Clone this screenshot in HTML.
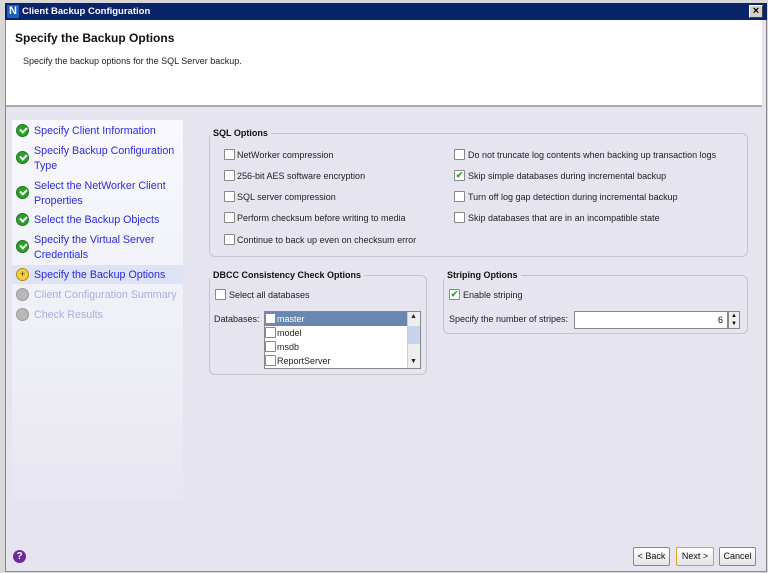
<!DOCTYPE html>
<html><head><meta charset="utf-8"><style>
*{margin:0;padding:0;box-sizing:border-box}
body{width:768px;height:573px;overflow:hidden;background:#d8d8d8;font-family:"Liberation Sans",sans-serif;position:relative}
.a{position:absolute}
.win{left:5px;top:3px;width:762px;height:569px;background:#e6e4ee;border:1px solid #888;}
.tb{left:5px;top:3px;width:762px;height:17px;background:#0a246a;color:#fff;font-size:9.5px;font-weight:bold;line-height:17px;padding-left:17px}
.hdr{left:6px;top:20px;width:756px;height:87px;background:#fff;border-bottom:2px solid #aaa}
.t9{font-size:9px;color:#222;white-space:nowrap}
.cb{width:11px;height:11px;border:1px solid #888;background:#fff;border-radius:1px}
.grp{border:1px solid #c4c4cc;border-radius:6px}
.gt{font-size:9px;font-weight:bold;background:#e6e4ee;padding:0 3px;color:#111}
.nav{font-size:10.7px;color:#2a2ae0;white-space:nowrap;line-height:15px}
.ok{width:13px;height:13px;border-radius:50%;background:#2aa02a;border:1px solid #1a7a1a}
.ok:after{content:"";position:absolute;left:3px;top:2px;width:5px;height:3px;border-left:2px solid #fff;border-bottom:2px solid #fff;transform:rotate(-45deg)}
.gr{width:13px;height:13px;border-radius:50%;background:#b8b8b8;border:1px solid #999}
.btn{height:19px;border:1px solid #888;border-radius:2px;background:linear-gradient(#fff,#e4e4e4);font-size:9px;text-align:center;line-height:17px;color:#111}
.chk{color:#2a2;font-size:9px;line-height:9px;text-align:center;font-weight:bold}
</style></head><body>
<div class="a win"></div>
<div class="a tb">Client Backup Configuration</div>
<div class="a" style="left:7px;top:5px;width:12px;height:13px;background:#2060c0;color:#fff;font-size:11px;font-weight:bold;text-align:center;line-height:13px">N</div>
<div class="a" style="left:749px;top:5px;width:14px;height:13px;background:#d4d0c8;border:1px solid #fff;border-right-color:#404040;border-bottom-color:#404040;font-size:11px;font-weight:bold;text-align:center;line-height:11px">×</div>
<div class="a hdr"></div>
<div class="a" style="left:15px;top:31px;font-size:12px;font-weight:bold;color:#111">Specify the Backup Options</div>
<div class="a t9" style="left:23px;top:56px">Specify the backup options for the SQL Server backup.</div>

<div class="a" style="left:12px;top:120px;width:171px;height:380px;background:linear-gradient(#f8f8fe,#ededf6 70%,#e8e6f0)"></div>
<div class="a" style="left:12px;top:265px;width:171px;height:19px;background:#dfe3f6"></div>
<div class="a ok" style="left:16px;top:124px"></div><div class="a nav" style="left:34px;top:124px">Specify Client Information</div>
<div class="a ok" style="left:16px;top:151px"></div><div class="a nav" style="left:34px;top:144px">Specify Backup Configuration<br>Type</div>
<div class="a ok" style="left:16px;top:186px"></div><div class="a nav" style="left:34px;top:179px">Select the NetWorker Client<br>Properties</div>
<div class="a ok" style="left:16px;top:213px"></div><div class="a nav" style="left:34px;top:213px">Select the Backup Objects</div>
<div class="a ok" style="left:16px;top:240px"></div><div class="a nav" style="left:34px;top:233px">Specify the Virtual Server<br>Credentials</div>
<div class="a" style="left:16px;top:268px;width:13px;height:13px;border-radius:50%;background:#f6d040;border:1px solid #b08a10;font-size:9px;line-height:11px;text-align:center;color:#333">+</div><div class="a nav" style="left:34px;top:268px">Specify the Backup Options</div>
<div class="a gr" style="left:16px;top:288px"></div><div class="a nav" style="left:34px;top:288px;color:#a8b0e0">Client Configuration Summary</div>
<div class="a gr" style="left:16px;top:308px"></div><div class="a nav" style="left:34px;top:308px;color:#a8b0e0">Check Results</div>

<div class="a grp" style="left:209px;top:133px;width:539px;height:124px"></div>
<div class="a gt" style="left:210px;top:128px">SQL Options</div>
<div class="a cb" style="left:224px;top:149px"></div><div class="a t9" style="left:237px;top:150px">NetWorker compression</div>
<div class="a cb" style="left:224px;top:170px"></div><div class="a t9" style="left:237px;top:171px">256-bit AES software encryption</div>
<div class="a cb" style="left:224px;top:191px"></div><div class="a t9" style="left:237px;top:192px">SQL server compression</div>
<div class="a cb" style="left:224px;top:212px"></div><div class="a t9" style="left:237px;top:213px">Perform checksum before writing to media</div>
<div class="a cb" style="left:224px;top:234px"></div><div class="a t9" style="left:237px;top:235px">Continue to back up even on checksum error</div>
<div class="a cb" style="left:454px;top:149px"></div><div class="a t9" style="left:468px;top:150px">Do not truncate log contents when backing up transaction logs</div>
<div class="a cb chk" style="left:454px;top:170px">✔</div><div class="a t9" style="left:468px;top:171px">Skip simple databases during incremental backup</div>
<div class="a cb" style="left:454px;top:191px"></div><div class="a t9" style="left:468px;top:192px">Turn off log gap detection during incremental backup</div>
<div class="a cb" style="left:454px;top:212px"></div><div class="a t9" style="left:468px;top:213px">Skip databases that are in an incompatible state</div>

<div class="a grp" style="left:209px;top:275px;width:218px;height:100px"></div>
<div class="a gt" style="left:210px;top:270px">DBCC Consistency Check Options</div>
<div class="a cb" style="left:215px;top:289px"></div><div class="a t9" style="left:229px;top:290px">Select all databases</div>
<div class="a t9" style="left:214px;top:314px">Databases:</div>
<div class="a" style="left:264px;top:311px;width:157px;height:58px;background:#fff;border:1px solid #888"></div>
<div class="a" style="left:265px;top:312px;width:142px;height:14px;background:#6a87b0"></div>
<div class="a cb" style="left:265px;top:313px"></div><div class="a t9" style="left:277px;top:314px;color:#fff">master</div>
<div class="a cb" style="left:265px;top:327px"></div><div class="a t9" style="left:277px;top:328px">model</div>
<div class="a cb" style="left:265px;top:341px"></div><div class="a t9" style="left:277px;top:342px">msdb</div>
<div class="a cb" style="left:265px;top:355px"></div><div class="a t9" style="left:277px;top:356px">ReportServer</div>
<div class="a" style="left:407px;top:312px;width:13px;height:56px;background:#eee;border-left:1px solid #ccc"></div>
<div class="a" style="left:408px;top:326px;width:12px;height:18px;background:#c8d4ec"></div>
<div class="a t9" style="left:410px;top:313px;font-size:7px">▲</div>
<div class="a t9" style="left:410px;top:358px;font-size:7px">▼</div>

<div class="a grp" style="left:443px;top:275px;width:305px;height:59px"></div>
<div class="a gt" style="left:444px;top:270px">Striping Options</div>
<div class="a cb chk" style="left:449px;top:289px">✔</div><div class="a t9" style="left:463px;top:290px">Enable striping</div>
<div class="a t9" style="left:449px;top:314px">Specify the number of stripes:</div>
<div class="a" style="left:574px;top:311px;width:154px;height:18px;background:#fff;border:1px solid #888;font-size:9px;text-align:right;padding-right:4px;line-height:16px">6</div>
<div class="a" style="left:728px;top:311px;width:12px;height:18px;border:1px solid #888;background:#eee;font-size:6px;line-height:8px;text-align:center">▲<br>▼</div>

<div class="a" style="left:13px;top:550px;width:13px;height:13px;border-radius:50%;background:#6a2a9a;color:#fff;font-size:10px;font-weight:bold;text-align:center;line-height:13px">?</div>
<div class="a btn" style="left:633px;top:547px;width:37px">&lt; Back</div>
<div class="a btn" style="left:676px;top:547px;width:38px;border-color:#e0a030">Next &gt;</div>
<div class="a btn" style="left:719px;top:547px;width:37px">Cancel</div>
</body></html>
